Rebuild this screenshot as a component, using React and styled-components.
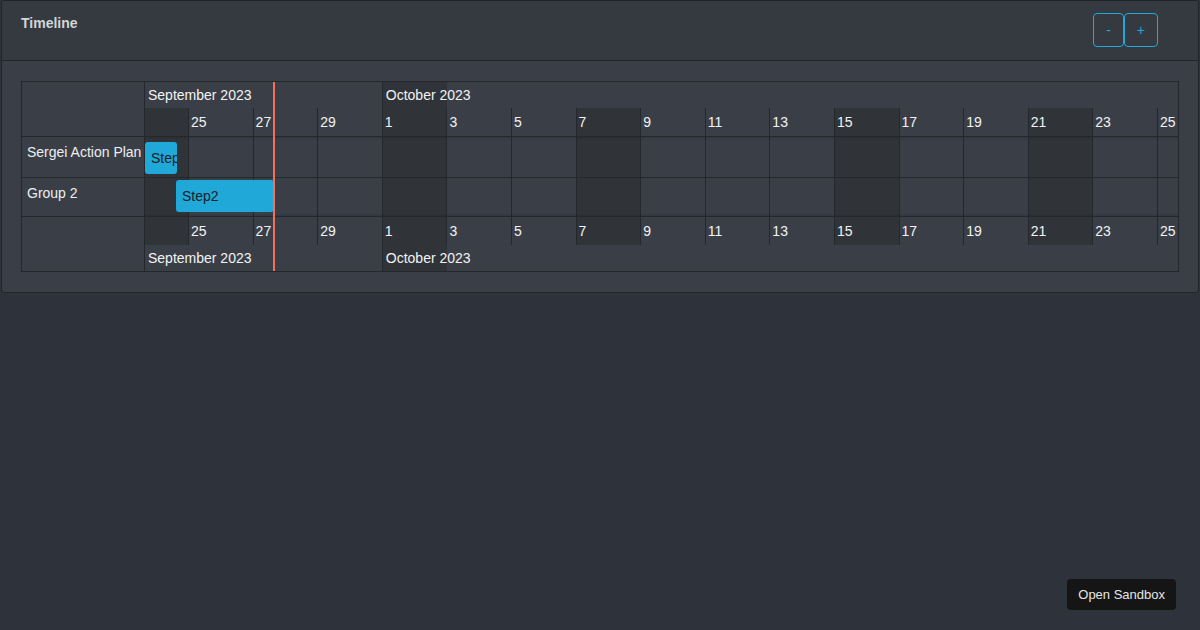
import styled, { createGlobalStyle } from 'styled-components';

const COL = 64.6;
const FIRST = 43;

const days = [
	{ label: '25' },
	{ label: '27' },
	{ label: '29' },
	{ label: '1', weekend: true },
	{ label: '3' },
	{ label: '5' },
	{ label: '7', weekend: true },
	{ label: '9' },
	{ label: '11' },
	{ label: '13' },
	{ label: '15', weekend: true },
	{ label: '17' },
	{ label: '19' },
	{ label: '21', weekend: true },
	{ label: '23' },
	{ label: '25' },
];

const groups = [
	{ name: 'Sergei Action Plan', height: 41, bar: { title: 'Step', left: 0, width: 32, top: 5 } },
	{ name: 'Group 2', height: 39, bar: { title: 'Step2', left: 31, width: 98, top: 2 } },
];

function DayCells({ labels }) {
	return (
		<>
			<Cell $width={FIRST} $first $weekend />
			{days.map((d, i) => (
				<Cell key={i} $width={COL} $weekend={d.weekend}>
					{labels && d.label}
				</Cell>
			))}
		</>
	);
}

function MonthRow() {
	return (
		<Row $height={26}>
			<Month $width={FIRST + COL * 3} $first>
				September 2023
			</Month>
			<Month $width={700} $shade>
				October 2023
			</Month>
		</Row>
	);
}

export default function App() {
	return (
		<>
			<GlobalStyle />
			<Card>
				<Header>
					<Title>Timeline</Title>
					<Zoom>
						<ZoomButton>-</ZoomButton>
						<ZoomButton>+</ZoomButton>
					</Zoom>
				</Header>
				<Body>
					<Table>
						<Sidebar>
							<SideBlock $height={54} />
							{groups.map((g) => (
								<SideBlock key={g.name} $height={g.height} $line>
									{g.name}
								</SideBlock>
							))}
							<SideBlock $height={55} $line />
						</Sidebar>

						<Chart>
							<MonthRow />
							<Row $height={28}>
								<DayCells labels />
							</Row>
							{groups.map((g, i) => (
								<Row key={g.name} $height={g.height} $line $shadow={i === 0 ? 'top' : 'bottom'}>
									<DayCells />
									<Bar style={{ left: g.bar.left, width: g.bar.width, top: g.bar.top }}>
										{g.bar.title}
									</Bar>
								</Row>
							))}
							<Row $height={29} $line>
								<DayCells labels />
							</Row>
							<MonthRow />
							<NowLine />
						</Chart>
					</Table>
				</Body>
			</Card>
			<SandboxButton>Open Sandbox</SandboxButton>
		</>
	);
}

const GlobalStyle = createGlobalStyle`
	body {
		margin: 0;
		background: #2e323a;
		font-family: "Liberation Sans", Arial, sans-serif;
		color: #eceef0;
	}
	* {
		box-sizing: border-box;
	}
`;

const Card = styled.section`
	margin: 0 1px;
	background: #3a3f47;
	border: 1px solid #212529;
	border-radius: 3px;
	overflow: hidden;
`;

const Header = styled.header`
	display: flex;
	justify-content: space-between;
	align-items: flex-start;
	height: 60px;
	padding: 12px 40px 0 19px;
	background: #343a40;
	border-bottom: 1px solid #212529;
`;

const Title = styled.h1`
	margin: 2px 0 0;
	font-size: 14px;
	line-height: 16px;
	font-weight: bold;
	color: #d3d5d7;
`;

const Zoom = styled.div`
	display: flex;
	gap: 0;
`;

const ZoomButton = styled.button`
	height: 34px;
	padding: 0 12px;
	background: transparent;
	border: 1px solid #1fa8d8;
	border-radius: 4px;
	color: #1fa8d8;
	font-family: inherit;
	font-size: 14px;
`;

const Body = styled.div`
	padding: 20px 20px 20px 19px;
`;

const Table = styled.div`
	display: flex;
	border: 1px solid #24272b;
	width: 1158px;
`;

const Sidebar = styled.div`
	flex: none;
	width: 123px;
	border-right: 1px solid #24272b;
`;

const SideBlock = styled.div`
	height: ${(p) => p.$height}px;
	padding: 7px 0 0 5px;
	font-size: 14px;
	line-height: 17px;
	white-space: nowrap;
	overflow: hidden;
	border-top: ${(p) => (p.$line ? '1px solid #24272b' : 'none')};
`;

const Chart = styled.div`
	position: relative;
	flex: 1;
	overflow: hidden;
`;

const Row = styled.div`
	position: relative;
	display: flex;
	height: ${(p) => p.$height}px;
	border-top: ${(p) => (p.$line ? '1px solid #24272b' : 'none')};

	&::after {
		content: '';
		position: absolute;
		left: 0;
		right: 0;
		height: 3px;
		pointer-events: none;
		${(p) => (p.$shadow === 'top' ? 'top: 0;' : 'bottom: 0;')}
		display: ${(p) => (p.$shadow ? 'block' : 'none')};
		background: ${(p) =>
			p.$shadow === 'top'
				? 'linear-gradient(rgba(0,0,0,.12), rgba(0,0,0,0))'
				: 'linear-gradient(rgba(0,0,0,0), rgba(0,0,0,.12))'};
	}
`;

const Cell = styled.div`
	flex: none;
	display: flex;
	align-items: center;
	width: ${(p) => p.$width}px;
	padding-left: 2px;
	font-size: 14px;
	color: #f2f3f4;
	background: ${(p) => (p.$weekend ? '#303438' : 'transparent')};
	border-left: ${(p) => (p.$first ? 'none' : '1px solid #24272b')};
`;

const Month = styled.div`
	flex: none;
	display: flex;
	align-items: center;
	width: ${(p) => p.$width}px;
	padding-left: 3px;
	font-size: 14px;
	color: #f2f3f4;
	border-left: ${(p) => (p.$first ? 'none' : '1px solid #24272b')};
	background: ${(p) =>
		p.$shade ? `linear-gradient(to right, #303438 0 ${COL - 1}px, transparent ${COL - 1}px)` : 'transparent'};
`;

const Bar = styled.div`
	position: absolute;
	height: 32px;
	display: flex;
	align-items: center;
	padding-left: 6px;
	background: #1fa8d8;
	border-radius: 3px;
	color: #1b2026;
	font-size: 14px;
	white-space: nowrap;
	overflow: hidden;
`;

const NowLine = styled.div`
	position: absolute;
	top: 0;
	bottom: 0;
	left: 128px;
	width: 2px;
	background: #f3715c;
`;

const SandboxButton = styled.button`
	position: fixed;
	right: 24px;
	bottom: 20px;
	height: 31px;
	padding: 0 11px;
	background: #151515;
	border: none;
	border-radius: 4px;
	color: #e6e6e6;
	font-family: inherit;
	font-size: 13px;
`;
